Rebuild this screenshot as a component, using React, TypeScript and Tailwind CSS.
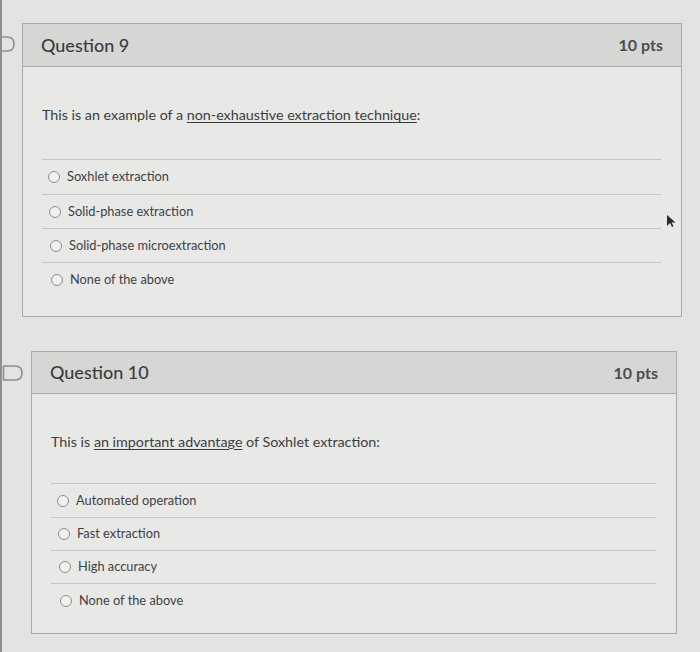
import React from 'react';

// Quiz page: two question cards (Canvas style)
const Flag = ({ className }: { className: string }) => (
  <svg className={className} width="22" height="18" viewBox="0 0 22 18" fill="none">
    <path d="M1.5 2 H13 Q20 2 20 9 Q20 16 13 16 H1.5 Z" stroke="#8a8f94" strokeWidth="1.6" strokeLinejoin="round" />
  </svg>
);

const Radio = () => (
  <span className="w-[12px] h-[12px] rounded-full border border-[#8d8d8d] bg-[#f1f1ef] shrink-0" />
);

interface QuestionProps {
  title: string;
  body: React.ReactNode;
  answers: string[];
  wrap: string;
  header: string;
  inner: string;
  list: string;
  rows: string[];
  tail: string;
}

function Question({ title, body, answers, wrap, header, inner, list, rows, tail }: QuestionProps) {
  return (
    <div className={`border border-[#a9a9a7] bg-[#e8e8e6] ${wrap}`}>
      <div className={`flex items-center justify-between bg-[#d6d6d4] border-b border-[#a7a7a5] ${header}`}>
        <span className="text-[18px] font-medium text-[#3a3d40]">{title}</span>
        <span className="text-[16px] font-bold text-[#4a4d50]">10 pts</span>
      </div>
      <div className={inner}>
        <p className="text-[14.3px] text-[#3b3e41] leading-[20px]">{body}</p>
        <div className={`mr-[20px] ${list}`}>
          {answers.map((a, i) => (
            <div key={a} className={`flex items-center gap-[7px] border-t border-[#c4c4c2] pl-[6px] ${rows[i]}`}>
              <Radio />
              <span className="text-[12.8px] text-[#3f4245]">{a}</span>
            </div>
          ))}
        </div>
        <div className={tail} />
      </div>
    </div>
  );
}

export default function App() {
  return (
    <div className="w-[700px] h-[652px] bg-[#e3e3e1] relative overflow-hidden flex flex-col" style={{ fontFamily: 'Lato, "Open Sans", sans-serif' }}>
      <div className="absolute left-0 top-0 bottom-0 w-[2px] bg-[#8f8f8d]" />

      <div className="relative">
        <Flag className="absolute left-[-6px] top-[35px]" />
        <Question
          title="Question 9"
          wrap="ml-[22px] mt-[23px] w-[660px]"
          header="h-[43px] pl-[18px] pr-[18px]"
          inner="pl-[19px] pt-[38px]"
          list="mt-[34px]"
          body={
            <>
              This is an example of a{' '}
              <span className="underline underline-offset-2">non-exhaustive extraction technique</span>:
            </>
          }
          answers={['Soxhlet extraction', 'Solid-phase extraction', 'Solid-phase microextraction', 'None of the above']}
          rows={['h-[35px]', 'h-[34px] pl-[7px]', 'h-[34px] pl-[8px]', 'h-[35px] pl-[9px]']}
          tail="h-[19px]"
        />
      </div>

      <div className="relative">
        <Flag className="absolute left-[2px] top-[47px]" />
        <Question
          title="Question 10"
          wrap="ml-[31px] mt-[34px] w-[646px]"
          header="h-[42px] pl-[18px] pr-[18px]"
          inner="pl-[19px] pt-[38px]"
          list="mt-[31px]"
          body={
            <>
              This is <span className="underline underline-offset-2">an important advantage</span> of Soxhlet extraction:
            </>
          }
          answers={['Automated operation', 'Fast extraction', 'High accuracy', 'None of the above']}
          rows={['h-[34px]', 'h-[33px] pl-[7px]', 'h-[33px] pl-[8px]', 'h-[34px] pl-[9px]']}
          tail="h-[16px]"
        />
      </div>

      <svg className="absolute left-[666px] top-[214px]" width="10" height="14" viewBox="0 0 10 14">
        <path d="M1 1 L1 12 L4 9 L6 13 L7.5 12.3 L5.6 8.5 L9.5 8.5 Z" fill="#2a2a2a" />
      </svg>
    </div>
  );
}
